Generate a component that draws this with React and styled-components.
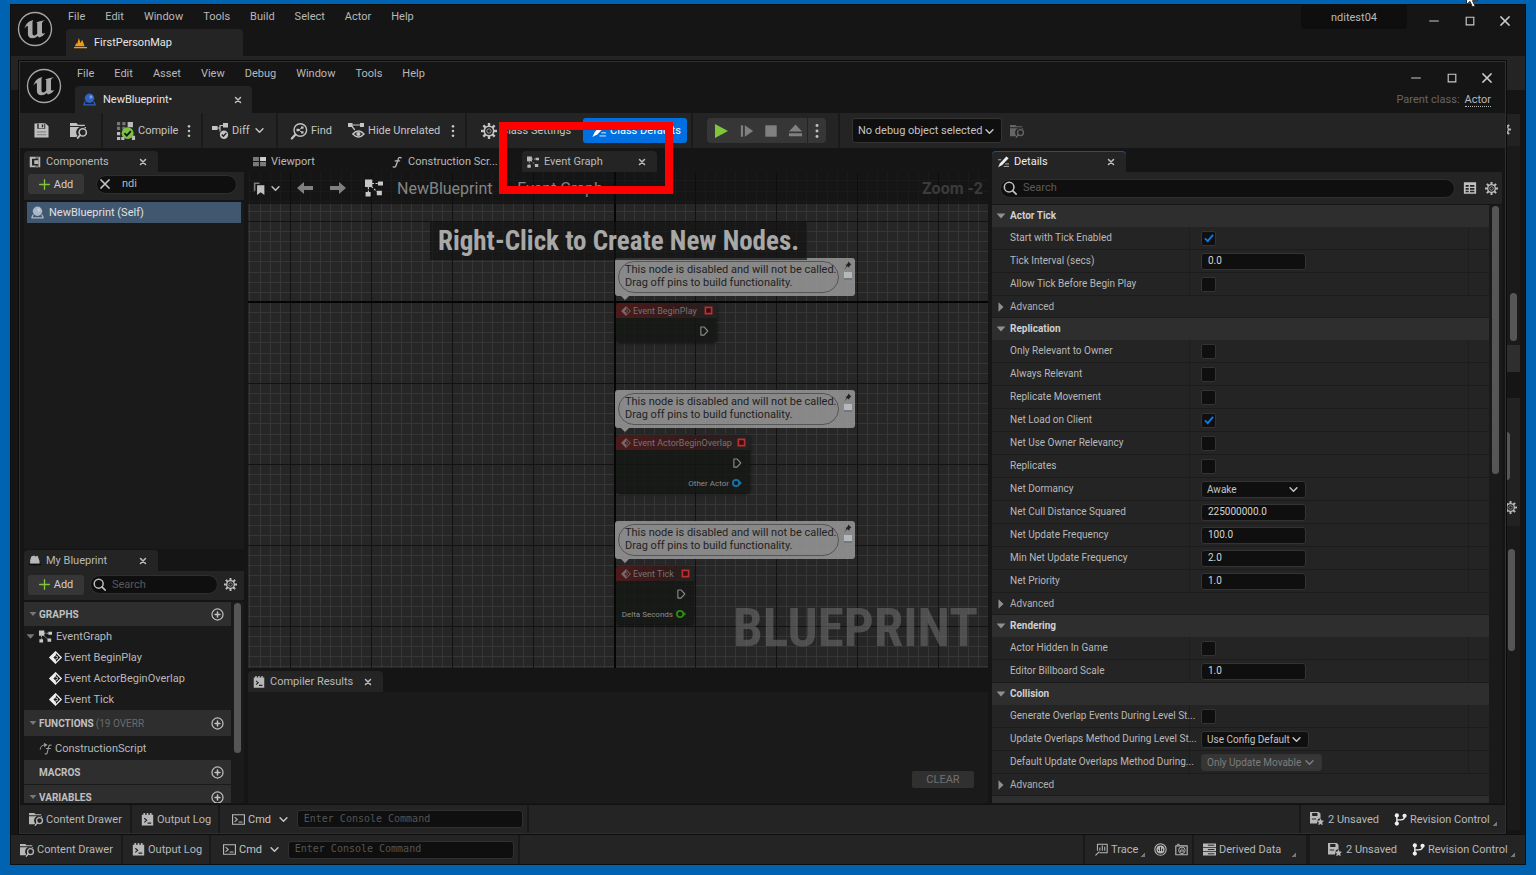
import React from "react";
import styled, { createGlobalStyle, css } from "styled-components";

const Global = createGlobalStyle`
  * { box-sizing: border-box; }
  body { margin: 0; background: #0063b1; }
  body, button, input, select {
    font-family: Roboto, "Liberation Sans", sans-serif;
    font-size: 11px;
    color: #b8b8b8;
  }
  button { border: 0; background: none; padding: 0; white-space: nowrap; }
  input, select { outline: 0; min-width: 0; }
`;

/* ---------- icons ---------- */

const Svg = styled.svg`
  display: block;
  flex: none;
  overflow: visible;
  color: ${(p) => p.$color || "inherit"};
`;

const Stroke = ({ d, w = 1.4 }) => (
  <path d={d} fill="none" stroke="currentColor" strokeWidth={w} strokeLinecap="round" strokeLinejoin="round" />
);
const Fill = ({ d, fill = "currentColor" }) => <path d={d} fill={fill} fillRule="evenodd" />;

const gearTeeth = Array.from({ length: 8 }, (_, i) => i * 45);

const glyphs = {
  close: <Stroke d="M4 4l8 8M12 4l-8 8" w={2.4} />,
  thinClose: <Stroke d="M2.500 2.500l11 11M13.500 2.500l-11 11" w={1.900} />,
  minimize: <Stroke d="M3 8h10" w={1.300} />,
  maximize: <Fill d="M3 3h10v10H3zM4.300 4.300v7.400h7.400V4.300z" />,
  chevron: <Stroke d="M3 5.500l5 5 5-5" w={2.200} />,
  dots: (
    <g fill="currentColor">
      <circle cx="8" cy="1.800" r="1.700" /><circle cx="8" cy="8" r="1.700" /><circle cx="8" cy="14.200" r="1.700" />
    </g>
  ),
  save: (
    <>
      <Fill d="M0.500 0.500h12L15.500 3.500v12h-15zM3.500 1v5h8.500V1z" />
      <Fill d="M5 0.500h6v5H5zM8.300 1.500v3h1.500v-3z" />
      <path d="M3 9.500h10M3 12.500h10" stroke="#777" strokeWidth="1" />
    </>
  ),
  folderFind: (
    <>
      <Fill d="M0 1h6l1.500 1.500H14v1.300H0z" />
      <Fill d="M0 4.800h15v1.500A5 5 0 0 0 7 13L6 14H0z" />
      <circle cx="12" cy="9.800" r="3.400" fill="none" stroke="currentColor" strokeWidth="1.500" />
      <Stroke d="M9.500 12.300L7.300 15" w={1.800} />
    </>
  ),
  compile: (
    <>
      <g fill="#777">
        <path d="M0 0h3v3H0zM5 0h3v3H5zM0 4.500h3v3H0zM5 4.500h3v3H5z" />
      </g>
      <g fill="#bdbdbd">
        <path d="M10 0h5v5h-5zM0 9.500h3v3H0zM0 14h3v3H0zM4 14h3v3H4zM14 13h3v4h-3z" />
      </g>
      <circle cx="10" cy="10.500" r="5.600" fill="#7cc142" />
      <path d="M7 10.500l2.200 2.300L13 8.500" fill="none" stroke="#151515" strokeWidth="1.700" />
    </>
  ),
  diff: (
    <>
      <Fill d="M0 3h5.500v4H0zM11 0h5v4.500h-5z" />
      <Stroke d="M5 5h3V2.500h3M8 5v3" w={1.200} />
      <circle cx="12" cy="11.700" r="4.200" fill="currentColor" />
      <path d="M9.800 11.500l1.600 1.700L14.300 10" fill="none" stroke="#242424" strokeWidth="1.400" />
    </>
  ),
  findNode: (
    <>
      <circle cx="9.300" cy="7" r="6.300" fill="none" stroke="currentColor" strokeWidth="1.400" />
      <Stroke d="M4.500 11.500L0.800 15.500" w={2.200} />
      <Fill d="M5.500 5.800H8v2.400H5.500zM10 3.500h2.500v2.200H10zM10 8.300h2.500v2.200H10z" />
      <Stroke d="M8 7l2.500-2M8 7l2.500 2.300" w={0.900} />
    </>
  ),
  hide: (
    <>
      <Fill d="M0 0h4.500v4H0zM12 0h4v4h-4z" />
      <Stroke d="M4 2h8M4 3.500l2.500 3" w={1.200} />
      <path d="M4.800 11Q10.500 5 16 11Q10.500 17 4.800 11z" fill="none" stroke="currentColor" strokeWidth="1.500" />
      <circle cx="10.400" cy="11" r="2.100" fill="currentColor" />
    </>
  ),
  gear: (
    <>
      <g fill="currentColor">
        {gearTeeth.map((a) => (
          <rect key={a} x="6.800" y="0" width="2.400" height="3.200" transform={`rotate(${a} 8 8)`} />
        ))}
      </g>
      <circle cx="8" cy="8" r="4.700" fill="none" stroke="currentColor" strokeWidth="1.600" />
      <circle cx="8" cy="8" r="2.200" fill="none" stroke="currentColor" strokeWidth="1" opacity="0.700" />
    </>
  ),
  pencil: (
    <>
      <Fill d="M12.500 0.500l3 2.500L7 12l-5.500 3L4 9.500z" />
      <Stroke d="M9.500 13.800h6M11.500 10.500h4M2 5h3" w={0.900} />
    </>
  ),
  play: <Fill d="M2 1l13 7-13 7z" fill="#7fc63b" />,
  step: <Fill d="M1 1.500h2.500v13H1zM5.500 1.500L15 8l-9.500 6.500z" />,
  stop: <Fill d="M1.500 1.500h13v13h-13z" />,
  eject: <Fill d="M8 1.500l7 7.500H1zM1 11h14v3H1z" />,
  components: (
    <>
      <Fill d="M1 1h8v2.500H4v9h5V15H1zM12.500 1H15v14h-2.500z" />
      <Fill d="M7 5.500h5.500v5H7zM10 0.500h1.500v3H10zM10 12.500h1.500v3H10z" />
    </>
  ),
  viewport: (
    <>
      <Fill d="M0 2.500h7.300v5H0zM0 8.700h7.300v5H0zM8.700 8.700H16v5H8.700z" fill="#7a7a7a" />
      <Fill d="M8.700 2.500H16v5H8.700z" fill="#d0d0d0" />
    </>
  ),
  func: (
    <>
      <Stroke d="M13.500 2.500Q10.500 0.500 9.500 4.500L7 12Q5.700 16 3 14.500" w={1.800} />
      <Stroke d="M5.500 6.500h6" w={1.500} />
    </>
  ),
  funcOverride: (
    <>
      <Stroke d="M15 4Q12.500 2.500 11.500 7L10.500 12Q9.500 16 7.500 14.500" w={1.300} />
      <Stroke d="M9 8h5M1.500 9Q1.500 4 7 3.500" w={1.200} />
      <Fill d="M6 1l4.500 2.500L6.500 6.500z" />
    </>
  ),
  graph: (
    <>
      <Fill d="M0 0.500h6.500V7H0zM11.500 2.200H16v3.600h-4.500zM0.500 11.500h4.500v4H0.500zM10.500 10.500H15v4h-4.500z" />
      <path d="M6 4h5.500M5.500 6.500l5.500 5M3 7v4.500" stroke="currentColor" strokeWidth="1" strokeDasharray="2 1.300" fill="none" />
    </>
  ),
  blueprint: (
    <>
      <Fill d="M3 2l4-1.500L8.500 2l3-1L14 8v3.500H1.500V7z" />
      <Fill d="M0 11.500h16v2H9l-1 1-1-1H0z" fill="#0c0c0c" />
    </>
  ),
  log: (
    <>
      <Fill d="M1 2h2V0h2v2h2V0h2v2h2V0h2v2h2v13.500H1z" />
      <path d="M4 6.500l3 2.500-3 2.500M8 12.500h4.500" fill="none" stroke="#202020" strokeWidth="1.400" />
    </>
  ),
  cmd: (
    <>
      <path d="M0.700 2.200h14.600v11.600H0.700z" fill="none" stroke="currentColor" strokeWidth="1.400" />
      <Stroke d="M3.500 5.500L6.500 8l-3 2.500M8.500 11h4" w={1.300} />
    </>
  ),
  search: (
    <>
      <circle cx="7" cy="7" r="5.500" fill="none" stroke="currentColor" strokeWidth="1.800" />
      <Stroke d="M11 11l4 4" w={2} />
    </>
  ),
  tableView: <Fill d="M1 1.500h14v13H1zM3 4.700v2h3.500v-2zM8 4.700v2h5v-2zM3 8v2h3.500V8zM8 8v2h5V8zM3 11.200v1.700h3.500v-1.700zM8 11.200v1.700h5v-1.700z" />,
  plus: <Stroke d="M8 1v14M1 8h14" w={2} />,
  circlePlus: (
    <>
      <circle cx="8" cy="8" r="6.800" fill="none" stroke="currentColor" strokeWidth="1.500" />
      <Stroke d="M8 5v6M5 8h6" w={1.900} />
    </>
  ),
  event: (
    <>
      <path d="M8 1l7 7-7 7-7-7z" fill="none" stroke="currentColor" strokeWidth="1.600" />
      <Fill d="M8.500 0.500v4.500L5.500 8l3 3v4.500L1 8z" />
      <Stroke d="M8.500 5.500v1.200h2v2.600h-2v1.200" w={0.800} />
    </>
  ),
  sphere: (
    <>
      <circle cx="8" cy="6.500" r="5.800" fill="currentColor" />
      <circle cx="9.800" cy="4.800" r="1.900" fill="#e4eaf2" opacity="0.450" />
      <Stroke d="M2.500 11L1 14.500h14L13.500 11" w={1.500} />
    </>
  ),
  level: <Fill d="M1 12.500l2-4 1 1 2-7 2 6 2-4 2 5 1 3zM0 13.500h16V15H0z" />,
  bookmark: (
    <>
      <Fill d="M1 0.500h7V2.500H3V10L1 12z" fill="#7a7a7a" />
      <Fill d="M5 4h9v12l-4.500-3.500L5 16z" />
    </>
  ),
  left: <Fill d="M0 8l7-6v4h9v4H7v4z" />,
  right: <Fill d="M16 8L9 2v4H0v4h9v4z" />,
  unsaved: (
    <>
      <Fill d="M0 0h10l2 2v5l-3 1-1 5H0zM2.500 1v3.500h6V1zM2 7.500v1h5v-1z" />
      <Fill d="M12 7l1.200 2.700 2.800.3-2 2 .5 3-2.500-1.400L9.500 15l.5-3-2-2 2.800-.3z" />
    </>
  ),
  branch: (
    <>
      <g fill="currentColor"><circle cx="3.500" cy="3" r="2.600" /><circle cx="13" cy="3.500" r="2.600" /><circle cx="3.500" cy="13" r="2.600" /></g>
      <Stroke d="M3.500 3v10M13 4q0 4.500-5 4.500H4" w={1.700} />
    </>
  ),
  trace: (
    <>
      <Stroke d="M3 9V1.500h12V12H6M5 11L1 15M6 9V6M9 9V3.500M12 9V5" w={1.300} />
    </>
  ),
  insights: (
    <>
      <circle cx="8" cy="8" r="7" fill="none" stroke="currentColor" strokeWidth="1.300" />
      <circle cx="8" cy="8" r="5" fill="currentColor" />
      <path d="M5.500 10V8M8 10V5M10.500 10V7" stroke="#242424" strokeWidth="1.200" />
    </>
  ),
  snapshot: (
    <>
      <Stroke d="M1 3.500h14v11H1zM3 1.500h2" w={1.400} />
      <circle cx="8.500" cy="9" r="4" fill="none" stroke="currentColor" strokeWidth="1.200" />
      <Stroke d="M6.800 10.500V9M8.500 10.500V7M10.200 10.500V8.500" w={1.100} />
    </>
  ),
  derived: (
    <>
      <Fill d="M0 0.500h16v4.300H0zM0 5.800h16v4.300H0zM0 11.100h16v4.300H0z" />
      <path d="M6 2.700h8M6 8h8M6 13.300h8" stroke="#242424" strokeWidth="1.200" />
    </>
  ),
  down: <Fill d="M1 4h14l-7 8z" />,
  closed: <Fill d="M4 0.500l8 7.500-8 7.500z" />,
  pin: <Fill d="M9 1l6 5-2 1-2 3 0 2-3-2.500L2 15l4.500-6L4 6.500h2.500L9 3z" />,
  check: <path d="M1.500 8.500l4.500 4.500 8.500-10" fill="none" stroke="#0f7cf0" strokeWidth="2.800" />,
  exec: <path d="M3 1.500h5l6 6.500-6 6.500H3z" fill="none" stroke="currentColor" strokeWidth="1.800" strokeLinejoin="round" />,
  dataPin: (
    <>
      <circle cx="6.500" cy="8" r="5" fill="none" stroke="currentColor" strokeWidth="3" />
      <Fill d="M12 4.500L16 8l-4 3.500z" />
    </>
  ),
  redPin: <path d="M2.500 2.500h11v11h-11z" fill="#3a0d0d" stroke="#b83030" strokeWidth="3" />,
};

const Icon = ({ name, size = 16, color }) => (
  <Svg width={size} height={size} viewBox="0 0 16 16" $color={color} aria-hidden="true">
    {glyphs[name]}
  </Svg>
);

const Logo = () => (
  <Svg width="36" height="36" viewBox="0 0 36 36" aria-label="Unreal Engine">
    <circle cx="18" cy="18" r="16.500" fill="#111" stroke="#a4a4a4" strokeWidth="1.400" />
    <path
      fill="#a8a8a8"
      d="M7.500 17.500C8.500 13 12 9.800 16.500 9C15.700 9.900 15.500 10.700 15.500 12V22.500C15.500 23.800 16.300 24.500 17.300 24.400C18.500 24.300 19.500 23.500 20.200 22.700V12.600C20.200 11.800 19.700 11.400 18.600 11.600C21 10.800 24 9.700 28.300 9.200C25.800 10.300 25 11.200 25 12.800V21C25 22.800 26 23.200 28.500 21.700C27.300 24 25 25.700 22 26.600L20.600 25C19 26.500 17.500 27.200 15.400 27.200C12.300 27.200 10.900 25.500 10.900 23V15.800C10.900 14.300 9.500 14.500 7.500 17.500Z"
    />
  </Svg>
);

/* ---------- windows ---------- */

const Desktop = styled.div`
  height: 100vh;
  padding: 4px 10px 10px;
  background: #0063b1;
  overflow: hidden;
`;

const OuterWindow = styled.section`
  position: relative;
  display: flex;
  flex-direction: column;
  height: 100%;
  border: 1px solid #0e0e0e;
  background: #151515;
`;

const InnerWindow = styled.section`
  position: absolute;
  inset: 56px 19px 30px 8px;
  display: flex;
  flex-direction: column;
  border: 1px solid #303030;
  outline: 1px solid #0b0b0b;
  background: #151515;
`;

const TitleBar = styled.header`
  display: flex;
  flex: none;
  height: 51px;
  padding-right: ${(p) => p.$end}px;
`;

const LogoCell = styled.div`
  display: flex;
  justify-content: center;
  align-items: center;
  width: 48px;
  margin-right: 7px;
  height: 48px;
`;

const TitleMain = styled.div`
  display: flex;
  flex-direction: column;
  justify-content: space-between;
  flex: 1;
`;

const Menu = styled.nav`
  display: flex;
  align-items: center;
  gap: 20px;
  height: 22px;
  padding-left: 2px;
`;

const WindowTab = styled.div`
  display: flex;
  align-items: center;
  gap: 7px;
  width: 177px;
  height: 27px;
  padding: 0 9px 0 8px;
  border-radius: 4px 4px 0 0;
  background: #242424;
  color: #e6e6e6;
`;

const Grow = styled.span`
  flex: 1;
  min-width: 0;
`;

const TitleSide = styled.div`
  display: flex;
  flex-direction: column;
  align-items: flex-end;
`;

const WindowControls = styled.div`
  display: flex;
  align-items: center;
  gap: 22px;
  height: 31px;
  color: #c9c9c9;
  button { color: inherit; }
`;

const ProjectName = styled.div`
  align-self: flex-start;
  width: 106px;
  margin-right: 20px;
  height: 24px;
  line-height: 25px;
  text-align: center;
  border-radius: 0 0 4px 4px;
  background: #0e0e0e;
`;

const ParentClass = styled.div`
  display: flex;
  gap: 5px;
  margin-right: 2px;
  color: #666;
  a {
    color: #b8b8b8;
    text-decoration: none;
    border-bottom: 1px dotted #b8b8b8;
  }
`;

const Cursor = styled.div`
  position: absolute;
  top: -11px;
  right: 58px;
`;

/* What the main editor shows along its right edge, beside the blueprint window */
const Backdrop = styled.div`
  display: flex;
  flex-direction: column;
  flex: 1;
  min-height: 0;
`;

const BackdropTop = styled.div`
  flex: none;
  height: 34px;
  background: #242424;
`;

const EdgeBlock = styled.div`
  display: flex;
  flex: none;
  align-self: flex-end;
  justify-content: flex-end;
  align-items: flex-start;
  width: 48px;
  height: ${(p) => p.$h}px;
  margin-right: 5px;
  padding: ${(p) => p.$top || 0}px ${(p) => p.$end || 3}px 0 0;
  background: ${(p) => p.$bg || "#1a1a1a"};
`;

const Thumb = styled.div`
  flex: none;
  width: 7px;
  height: ${(p) => p.$h}px;
  border-radius: 4px;
  background: #565656;
`;

/* ---------- toolbar ---------- */

const Toolbar = styled.div`
  display: flex;
  flex: none;
  height: 35px;
  background: #242424;
`;

const Group = styled.div`
  display: flex;
  align-items: center;
  gap: ${(p) => p.$gap || 12}px;
  width: ${(p) => (p.$w ? p.$w + "px" : "auto")};
  padding-left: ${(p) => p.$pad}px;
  border-right: ${(p) => (p.$w ? "2px solid #1a1a1a" : "0")};
`;

const ToolButton = styled.button`
  display: flex;
  align-items: center;
  gap: 4px;
  color: #c4c4c4;
`;

const PrimaryTool = styled(ToolButton)`
  width: 104px;
  height: 25px;
  padding-left: 8px;
  gap: 4px;
  border-radius: 3px;
  background: #0070e0;
  color: #fff;
`;

const PlayGroup = styled.div`
  display: flex;
  align-items: center;
  height: 25px;
  border-radius: 4px;
  background: #363636;
  color: #808080;
  button { display: flex; justify-content: center; width: 24px; color: inherit; }
  button:first-child { width: 28px; }
  button:last-child {
    align-items: center;
    width: 19px;
    height: 25px;
    border-left: 1px solid #242424;
    color: #c0c0c0;
  }
`;

const SelectBox = styled.span`
  position: relative;
  display: inline-flex;
  width: ${(p) => p.$w}px;
  height: ${(p) => p.$h || 17}px;
  select {
    width: 100%;
    appearance: none;
    padding: 0 15px 0 5px;
    border: 1px solid #333;
    border-radius: 3px;
    background: ${(p) => (p.$muted ? "#363636" : "#0f0f0f")};
    color: ${(p) => (p.$muted ? "#7d7d7d" : "#c4c4c4")};
    font-size: ${(p) => p.$font || 10}px;
    opacity: 1;
  }
  svg {
    position: absolute;
    right: 7px;
    top: calc(50% - 5px);
    pointer-events: none;
    color: ${(p) => (p.$muted ? "#7d7d7d" : "#c4c4c4")};
  }
`;

const Dropdown = ({ id, value, label, ...box }) => (
  <SelectBox {...box}>
    <select id={id} aria-label={label} defaultValue={value} disabled={box.$muted}>
      <option>{value}</option>
    </select>
    <Icon name="chevron" size={11} />
  </SelectBox>
);

/* ---------- docks ---------- */

const Docks = styled.main`
  display: flex;
  flex: 1;
  gap: 4px;
  min-height: 0;
  padding: 3px 3px 1px 4px;
`;

const Dock = styled.div`
  display: flex;
  flex-direction: column;
  min-width: 0;
  flex: ${(p) => (p.$w ? `0 0 ${p.$w}px` : "1 1 0")};
`;

const TabStrip = styled.div`
  display: flex;
  flex: none;
  height: 21px;
  margin-top: ${(p) => p.$top || 0}px;
`;

const Tab = styled.div`
  display: flex;
  align-items: center;
  gap: 5px;
  width: ${(p) => p.$w}px;
  padding: 0 10px 0 5px;
  border-radius: 4px 4px 0 0;
  background: ${(p) => (p.$on ? "#242424" : "transparent")};
  color: ${(p) => (p.$bright ? "#eee" : "#b8b8b8")};
  line-height: 20px;
  white-space: nowrap;
  ${(p) => p.$focus && css`box-shadow: inset 0 1px #12549a;`}
`;

const CloseButton = styled.button`
  color: #c0c0c0;
`;

const TabView = ({ icon, children, closable = true, iconSize = 12, ...rest }) => (
  <Tab {...rest}>
    <Icon name={icon} size={iconSize} />
    <Grow>{children}</Grow>
    {closable && (
      <CloseButton aria-label={`Close ${children}`}>
        <Icon name="close" size={10} />
      </CloseButton>
    )}
  </Tab>
);

const PanelBar = styled.div`
  display: flex;
  align-items: center;
  flex: none;
  gap: ${(p) => p.$gap || 6}px;
  height: ${(p) => p.$h || 28}px;
  padding: 0 ${(p) => p.$end || 7}px ${(p) => p.$bottom || 0}px ${(p) => p.$start || 4}px;
  margin-bottom: ${(p) => p.$below || 2}px;
  background: #242424;
`;

const AddButton = styled.button`
  display: flex;
  align-items: center;
  justify-content: center;
  gap: 4px;
  width: 56px;
  height: 20px;
  border-radius: 3px;
  background: #363636;
  color: #d0d0d0;
`;

const SearchBox = styled.label`
  display: flex;
  align-items: center;
  gap: ${(p) => p.$gap || 6}px;
  flex: 1;
  min-width: 0;
  height: 19px;
  padding: 0 6px 0 2px;
  border: 1px solid #2f2f2f;
  border-radius: 10px;
  background: #0f0f0f;
  color: #c0c0c0;
  input {
    flex: 1;
    width: 100%;
    padding: 0 0 1px;
    border: 0;
    background: none;
  }
  input::placeholder { color: #5a5a5a; opacity: 1; }
`;

const IconButton = styled.button`
  flex: none;
  color: #c0c0c0;
`;

const ListArea = styled.div`
  flex: 1;
  min-height: 0;
  padding: 0 3px;
  background: #1a1a1a;
`;

const SelectedRow = styled.div`
  display: flex;
  align-items: center;
  gap: 5px;
  height: 21px;
  padding-left: 4px;
  background: #40576f;
  color: #e0e0e0;
`;

const LowerDock = styled.div`
  display: flex;
  flex-direction: column;
  flex: 0 0 253px;
  min-height: 0;
  margin-top: 1px;
`;

const ScrollRow = styled.div`
  display: flex;
  flex: 1;
  min-height: 0;
  overflow: hidden;
  background: #1a1a1a;
`;

const ScrollBody = styled.div`
  flex: 1;
  min-width: 0;
`;

const ScrollTrack = styled.div`
  padding: ${(p) => p.$top || 0}px 3px 0;
  background: #1a1a1a;
`;

const TreeHeader = styled.div`
  display: flex;
  align-items: center;
  gap: 2px;
  height: ${(p) => p.$h || 24}px;
  margin-bottom: ${(p) => p.$gap || 0}px;
  padding: 0 7px 0 5px;
  background: #2e2e2e;
  color: #c0c0c0;
  font-size: 10px;
  white-space: nowrap;
  b { font-weight: 700; }
  i { font-style: normal; color: #6b6b6b; }
`;

const TreeItem = styled.div`
  display: flex;
  align-items: center;
  gap: ${(p) => p.$gap || 2}px;
  height: ${(p) => p.$h || 21}px;
  padding-left: ${(p) => p.$indent}px;
`;

/* ---------- graph ---------- */

const Canvas = styled.div`
  position: relative;
  flex: 1;
  min-height: 0;
  overflow: hidden;
  background: #262626;
`;

const GridArt = styled.svg`
  position: absolute;
  inset: 0;
  width: 100%;
  height: 100%;
`;

const GraphBar = styled.div`
  position: relative;
  display: flex;
  align-items: center;
  height: 32px;
  padding: 0 5px;
  background: rgba(12, 12, 12, 0.65);
  color: #858585;
  font-size: 16px;
  white-space: nowrap;
`;

const GraphTools = styled.div`
  display: flex;
  align-items: center;
  gap: ${(p) => p.$gap}px;
  width: ${(p) => p.$w}px;
`;

const Crumbs = styled.div`
  display: flex;
  flex: 1;
  gap: 10px;
`;

const Zoom = styled.b`
  color: #3b3b3b;
  font-size: 16px;
`;

const Hint = styled.div`
  position: absolute;
  left: 182px;
  top: 50px;
  height: 38px;
  padding: 0 8px;
  line-height: 38px;
  background: rgba(18, 18, 18, 0.7);
  color: #a8a8a8;
  font-family: "Roboto Condensed", Roboto, sans-serif;
  font-size: 27px;
  font-weight: 700;
  white-space: nowrap;
`;

const Watermark = styled.div`
  position: absolute;
  right: 10px;
  bottom: 9px;
  color: rgba(120, 120, 120, 0.5);
  font-family: "Roboto Condensed", Roboto, sans-serif;
  font-size: 53px;
  line-height: 62px;
  font-weight: 700;
`;

const NodeSpot = styled.article`
  position: absolute;
  left: 367px;
  top: ${(p) => p.$top}px;
`;

const Bubble = styled.div`
  position: relative;
  display: flex;
  gap: 4px;
  width: 240px;
  height: 38px;
  padding: 3px;
  border-radius: 3px;
  background: rgba(150, 150, 150, 0.88);
  color: #222;
  p {
    width: 223px;
    margin: 0;
    padding: 1px 0 0 6px;
    border: 1px solid #555;
    border-radius: 16px;
    line-height: 13px;
    white-space: nowrap;
  }
  &::after {
    content: "";
    position: absolute;
    left: 6px;
    top: 38px;
    border: 4px solid transparent;
    border-top-color: #8c8c8c;
    border-bottom: 0;
  }
`;

const BubbleMarks = styled.div`
  display: flex;
  flex-direction: column;
  align-items: center;
  gap: 2px;
  &::after {
    content: "";
    width: 8px;
    height: 6px;
    background: #b4b8bb;
    border-bottom: 2px solid #6f7a80;
  }
`;

const Node = styled.div`
  width: ${(p) => p.$w}px;
  height: ${(p) => p.$h}px;
  margin: 7px 0 0 1px;
  border-radius: 4px;
  background: rgba(20, 22, 20, 0.8);
  box-shadow: 0 1px 3px #0c0c0c;
  color: #8c8c8c;
  font-size: 8px;
`;

const NodeTitle = styled.div`
  display: flex;
  align-items: center;
  gap: 2px;
  height: 15px;
  padding: 0 4px 0 5px;
  border-radius: 4px 4px 0 0;
  background: linear-gradient(90deg, #4c1b1b, #331a1a 60%, #222);
  color: #747474;
  font-size: 9px;
  white-space: nowrap;
`;

const PinRow = styled.div`
  display: flex;
  align-items: center;
  justify-content: flex-end;
  gap: 3px;
  height: 20px;
  margin-top: ${(p) => (p.$first ? 3 : 0)}px;
  padding-right: 8px;
`;

const CompilerDock = styled.div`
  display: flex;
  flex-direction: column;
  flex: 0 0 135px;
`;

const CompilerBody = styled.div`
  display: flex;
  flex: 1;
  justify-content: flex-end;
  align-items: flex-end;
  padding: 0 14px 15px;
  background: #1a1a1a;
`;

const ClearButton = styled.button`
  width: 62px;
  height: 17px;
  border-radius: 2px;
  background: #303030;
  color: #707070;
`;

/* ---------- details ---------- */

const Section = styled.h3`
  display: flex;
  align-items: center;
  gap: 4px;
  height: 22px;
  margin: 0;
  padding-left: 4px;
  background: #2e2e2e;
  color: #d0d0d0;
  font-size: 10px;
  font-weight: 700;
  line-height: 20px;
  svg { color: #909090; }
`;

const Advanced = styled(Section)`
  background: #242424;
  border-bottom: 1px solid #1c1c1c;
  color: #b0b0b0;
  font-weight: 400;
`;

const Property = styled.div`
  display: grid;
  grid-template-columns: 198px 1fr 20px;
  height: 23px;
  border-bottom: 1px solid #1c1c1c;
  background: #242424;
  font-size: 10px;
  > * { border-right: 1px solid #1e1e1e; }
  > :last-child { border-right: 0; }
`;

const PropertyLabel = styled.label`
  padding-left: 18px;
  line-height: 22px;
  white-space: nowrap;
`;

const PropertyValue = styled.div`
  display: flex;
  align-items: center;
  padding-left: 11px;
`;

const NumberInput = styled.input`
  width: 105px;
  height: 17px;
  padding: 0 6px 1px;
  border: 1px solid #333;
  border-radius: 3px;
  background: #0f0f0f;
  color: #d4d4d4;
  font-size: 10px;
`;

const Tick = styled.span`
  position: relative;
  display: flex;
  width: 15px;
  height: 15px;
  input {
    appearance: none;
    width: 15px;
    height: 15px;
    margin: 0;
    border: 1px solid #333;
    border-radius: 2px;
    background: #0f0f0f;
  }
  svg { position: absolute; left: 3px; top: 2px; display: none; pointer-events: none; }
  input:checked + svg { display: block; }
`;

/* ---------- status bar ---------- */

const StatusBar = styled.footer`
  display: flex;
  flex: none;
  height: ${(p) => p.$h}px;
  background: #242424;
  border-top: 1px solid #111;
  white-space: nowrap;
`;

const StatusCell = styled.div`
  display: flex;
  flex: none;
  align-items: center;
  align-self: stretch;
  gap: ${(p) => p.$gap || 3}px;
  width: ${(p) => p.$w}px;
  padding-left: ${(p) => p.$pad || 9}px;
  border-right: 2px solid ${(p) => (p.$open ? "transparent" : "#191919")};
  ${(p) => p.$lead && css`border-left: 2px solid #191919;`}
`;

const ConsoleInput = styled.input`
  width: 226px;
  height: 18px;
  margin-left: 5px;
  padding: 0 6px 2px;
  border: 1px solid #303030;
  border-radius: 3px;
  background: #0f0f0f;
  font-family: "DejaVu Sans Mono", monospace;
  font-size: 10px;
  &::placeholder { color: #555; opacity: 1; }
`;

const Corner = styled.span`
  flex: none;
  align-self: flex-end;
  width: 4px;
  height: 4px;
  margin-bottom: 7px;
  margin-left: ${(p) => p.$gap || 0}px;
  background: linear-gradient(135deg, transparent 50%, #777 50%);
`;

const Highlight = styled.div`
  position: absolute;
  left: 479px;
  top: 60px;
  width: 174px;
  height: 72px;
  border: 8px solid #f00;
  pointer-events: none;
`;

/* ---------- composed parts ---------- */

const MenuBar = ({ items }) => (
  <Menu>
    {items.map((item) => (
      <button key={item}>{item}</button>
    ))}
  </Menu>
);

const Controls = () => (
  <WindowControls>
    <button aria-label="Minimize"><Icon name="minimize" size={14} /></button>
    <button aria-label="Maximize"><Icon name="maximize" size={14} /></button>
    <button aria-label="Close"><Icon name="thinClose" size={12} /></button>
  </WindowControls>
);

const StatusStart = () => (
  <>
    <StatusCell $w={112}>
      <Icon name="folderFind" size={14} />
      <button>Content Drawer</button>
    </StatusCell>
    <StatusCell $w={88}>
      <Icon name="log" size={13} />
      <button>Output Log</button>
    </StatusCell>
    <StatusCell $w={309} $pad={12}>
      <Icon name="cmd" size={13} />
      <ToolButton>Cmd&nbsp;<Icon name="chevron" size={11} /></ToolButton>
      <ConsoleInput aria-label="Console command" placeholder="Enter Console Command" />
    </StatusCell>
    <Grow />
  </>
);

const StatusEnd = ({ $w, $pad }) => (
  <StatusCell $w={$w} $pad={$pad} $open $lead $gap={4}>
    <Icon name="unsaved" size={14} />
    <button>2 Unsaved</button>
    <StatusCell $pad={11} $open $gap={3}>
      <Icon name="branch" size={13} color="#f0f0f0" />
      <button>Revision Control</button>
      <Corner />
    </StatusCell>
  </StatusCell>
);

const events = [
  { title: "Event BeginPlay", top: 86, w: 101, h: 39 },
  { title: "Event ActorBeginOverlap", top: 218, w: 134, h: 58, pin: "Other Actor", color: "#1374ac" },
  { title: "Event Tick", top: 349, w: 78, h: 58, pin: "Delta Seconds", color: "#2b8a12" },
];

const EventNode = ({ title, top, w, h, pin, color }) => (
  <NodeSpot $top={top}>
    <Bubble>
      <p>This node is disabled and will not be called.<br />Drag off pins to build functionality.</p>
      <BubbleMarks><Icon name="pin" size={9} /></BubbleMarks>
    </Bubble>
    <Node $w={w} $h={h}>
      <NodeTitle>
        <Icon name="event" size={10} color="#7c6c6c" />
        <Grow>{title}</Grow>
        <Icon name="redPin" size={9} />
      </NodeTitle>
      <PinRow $first><Icon name="exec" size={10} color="#8a8a8a" /></PinRow>
      {pin && <PinRow>{pin}<Icon name="dataPin" size={10} color={color} /></PinRow>}
    </Node>
  </NodeSpot>
);

const minor = [10, 20, 30, 40, 51, 61, 71];

const Grid = () => (
  <GridArt aria-hidden="true">
    <defs>
      <pattern id="grid" x="42" y="49" width="81" height="81" patternUnits="userSpaceOnUse">
        {minor.map((m) => (
          <path key={m} d={`M${m} 0h1v81h-1zM0 ${m}h81v1H0z`} fill="#363636" />
        ))}
        <path d="M0 0h81v1H0zM0 0h1v81H0z" fill="#121212" />
      </pattern>
    </defs>
    <rect width="100%" height="100%" fill="url(#grid)" />
    <rect x="0" y="129" width="100%" height="2" fill="#050505" />
    <rect x="366" y="0" width="2" height="100%" fill="#050505" />
  </GridArt>
);

const details = [
  {
    name: "Actor Tick",
    advanced: true,
    rows: [
      ["Start with Tick Enabled", "tick", true],
      ["Tick Interval (secs)", "number", "0.0"],
      ["Allow Tick Before Begin Play", "tick", false],
    ],
  },
  {
    name: "Replication",
    advanced: true,
    rows: [
      ["Only Relevant to Owner", "tick", false],
      ["Always Relevant", "tick", false],
      ["Replicate Movement", "tick", false],
      ["Net Load on Client", "tick", true],
      ["Net Use Owner Relevancy", "tick", false],
      ["Replicates", "tick", false],
      ["Net Dormancy", "select", "Awake", 105],
      ["Net Cull Distance Squared", "number", "225000000.0"],
      ["Net Update Frequency", "number", "100.0"],
      ["Min Net Update Frequency", "number", "2.0"],
      ["Net Priority", "number", "1.0"],
    ],
  },
  {
    name: "Rendering",
    rows: [
      ["Actor Hidden In Game", "tick", false],
      ["Editor Billboard Scale", "number", "1.0"],
    ],
  },
  {
    name: "Collision",
    advanced: true,
    rows: [
      ["Generate Overlap Events During Level St...", "tick", false],
      ["Update Overlaps Method During Level St...", "select", "Use Config Default", 108],
      ["Default Update Overlaps Method During...", "muted", "Only Update Movable", 121],
    ],
  },
];

const PropertyRow = ({ row: [label, kind, value, width] }) => {
  const id = label.replace(/\W+/g, "-").toLowerCase();
  return (
    <Property>
      <PropertyLabel htmlFor={id}>{label}</PropertyLabel>
      <PropertyValue>
        {kind === "tick" && (
          <Tick>
            <input id={id} type="checkbox" defaultChecked={value} />
            <Icon name="check" size={10} />
          </Tick>
        )}
        {kind === "number" && <NumberInput id={id} defaultValue={value} />}
        {(kind === "select" || kind === "muted") && (
          <Dropdown id={id} label={label} value={value} $w={width} $muted={kind === "muted"} />
        )}
      </PropertyValue>
      <span />
    </Property>
  );
};

const Details = () => (
  <Dock $w={510}>
    <TabStrip>
      <TabView icon="pencil" $w={134} $on $bright $focus>Details</TabView>
    </TabStrip>
    <PanelBar $h={32} $start={8} $end={4} $gap={8} $below={1}>
      <SearchBox>
        <Icon name="search" size={14} />
        <input aria-label="Search details" placeholder="Search" />
      </SearchBox>
      <IconButton aria-label="Property matrix"><Icon name="tableView" size={14} /></IconButton>
      <IconButton aria-label="Details settings"><Icon name="gear" size={13} /></IconButton>
    </PanelBar>
    <ScrollRow>
      <ScrollBody>
        {details.map((section) => (
          <React.Fragment key={section.name}>
            <Section><Icon name="down" size={10} />{section.name}</Section>
            {section.rows.map((row) => <PropertyRow key={row[0]} row={row} />)}
            {section.advanced && <Advanced as="div"><Icon name="closed" size={10} />Advanced</Advanced>}
          </React.Fragment>
        ))}
        <Section as="div" />
      </ScrollBody>
      <ScrollTrack $top={1}><Thumb $h={268} /></ScrollTrack>
    </ScrollRow>
  </Dock>
);

const TreeSection = ({ title, note, open = true, ...rest }) => (
  <TreeHeader {...rest}>
    <Icon name={open ? "down" : ""} size={8} color="#777" />
    <b>{title}</b>
    <i>{note}</i>
    <Grow />
    <IconButton aria-label={`Add to ${title}`}><Icon name="circlePlus" size={13} /></IconButton>
  </TreeHeader>
);

const LeftDock = () => (
  <Dock $w={220}>
    <TabStrip>
      <TabView icon="components" $w={134} $on>Components</TabView>
    </TabStrip>
    <PanelBar $gap={12} $bottom={4}>
      <AddButton><Icon name="plus" size={11} color="#7fc63b" />Add</AddButton>
      <SearchBox $gap={11}>
        <Icon name="thinClose" size={12} />
        <input aria-label="Search components" defaultValue="ndi" />
      </SearchBox>
    </PanelBar>
    <ListArea>
      <SelectedRow><Icon name="sphere" size={13} color="#a9b8c8" />NewBlueprint (Self)</SelectedRow>
    </ListArea>
    <LowerDock>
      <TabStrip>
        <TabView icon="blueprint" $w={134} $on>My Blueprint</TabView>
      </TabStrip>
      <PanelBar $h={29} $bottom={2}>
        <AddButton><Icon name="plus" size={11} color="#7fc63b" />Add</AddButton>
        <SearchBox>
          <Icon name="search" size={13} />
          <input aria-label="Search blueprint" placeholder="Search" />
        </SearchBox>
        <IconButton aria-label="Blueprint settings"><Icon name="gear" size={13} /></IconButton>
      </PanelBar>
      <ScrollRow>
        <ScrollBody>
          <TreeSection title="GRAPHS" />
          <TreeItem $indent={2} $gap={4}>
            <Icon name="down" size={9} color="#777" />
            <Icon name="graph" size={13} color="#c8c8c8" />
            EventGraph
          </TreeItem>
          {events.map((e) => (
            <TreeItem key={e.title} $indent={25}><Icon name="event" size={13} color="#eee" />{e.title}</TreeItem>
          ))}
          <TreeSection title="FUNCTIONS" note="(19 OVERR" $h={26} />
          <TreeItem $indent={15} $h={24} $gap={3}><Icon name="funcOverride" size={13} color="#999" />ConstructionScript</TreeItem>
          <TreeSection title="MACROS" open={false} $gap={1} />
          <TreeSection title="VARIABLES" />
        </ScrollBody>
        <ScrollTrack $top={1}><Thumb $h={150} /></ScrollTrack>
      </ScrollRow>
    </LowerDock>
  </Dock>
);

const CenterDock = () => (
  <Dock>
    <TabStrip>
      <TabView icon="viewport" iconSize={13} $w={138} closable={false}>Viewport</TabView>
      <TabView icon="func" $w={136} closable={false}>Construction Scr...</TabView>
      <TabView icon="graph" $w={135} $on>Event Graph</TabView>
    </TabStrip>
    <Canvas>
      <Grid />
      <GraphBar>
        <GraphTools $w={44} $gap={4}>
          <Icon name="bookmark" size={13} color="#c0c0c0" />
          <Icon name="chevron" size={11} color="#c0c0c0" />
        </GraphTools>
        <GraphTools $w={68} $gap={17}>
          <Icon name="left" color="#808080" />
          <Icon name="right" color="#808080" />
        </GraphTools>
        <GraphTools $w={32}><Icon name="graph" size={18} color="#c8c8c8" /></GraphTools>
        <Crumbs><span>NewBlueprint</span><span>›</span><span>Event Graph</span></Crumbs>
        <Zoom>Zoom -2</Zoom>
      </GraphBar>
      {events.map((e) => <EventNode key={e.title} {...e} />)}
      <Hint>Right-Click to Create New Nodes.</Hint>
      <Watermark>BLUEPRINT</Watermark>
    </Canvas>
    <CompilerDock>
      <TabStrip $top={3}>
        <TabView icon="log" $w={135} $on>Compiler Results</TabView>
      </TabStrip>
      <CompilerBody><ClearButton>CLEAR</ClearButton></CompilerBody>
    </CompilerDock>
  </Dock>
);

const MainToolbar = () => (
  <Toolbar>
    <Group $w={83} $pad={14} $gap={21}>
      <IconButton aria-label="Save"><Icon name="save" size={15} /></IconButton>
      <IconButton aria-label="Browse"><Icon name="folderFind" size={17} /></IconButton>
    </Group>
    <Group $w={100} $pad={14} $gap={5}>
      <ToolButton><Icon name="compile" size={17} />Compile</ToolButton>
      <IconButton aria-label="Compile options"><Icon name="dots" size={12} /></IconButton>
    </Group>
    <Group $w={75} $pad={9}>
      <ToolButton><Icon name="diff" />Diff<Icon name="chevron" size={11} /></ToolButton>
    </Group>
    <Group $w={189} $pad={13} $gap={16}>
      <ToolButton><Icon name="findNode" />Find</ToolButton>
      <ToolButton><Icon name="hide" />Hide Unrelated&nbsp;<Icon name="dots" size={12} /></ToolButton>
    </Group>
    <Group $w={226} $pad={14}>
      <ToolButton><Icon name="gear" />Class Settings</ToolButton>
      <PrimaryTool><Icon name="pencil" size={15} />Class Defaults</PrimaryTool>
    </Group>
    <Group $w={147} $pad={14}>
      <PlayGroup>
        <button aria-label="Play"><Icon name="play" /></button>
        <button aria-label="Step"><Icon name="step" size={14} /></button>
        <button aria-label="Stop"><Icon name="stop" size={14} /></button>
        <button aria-label="Eject"><Icon name="eject" size={15} /></button>
        <button aria-label="Play options"><Icon name="dots" size={14} /></button>
      </PlayGroup>
    </Group>
    <Group $pad={12} $gap={8}>
      <Dropdown label="Debug object" value="No debug object selected" $w={150} $h={25} $font={11} />
      <Icon name="folderFind" size={14} color="#666" />
    </Group>
  </Toolbar>
);

export default function App() {
  return (
    <Desktop>
      <Global />
      <OuterWindow>
        <TitleBar $end={14}>
          <LogoCell><Logo /></LogoCell>
          <TitleMain>
            <MenuBar items={["File", "Edit", "Window", "Tools", "Build", "Select", "Actor", "Help"]} />
            <WindowTab><Icon name="level" size={13} color="#f39a12" />FirstPersonMap</WindowTab>
          </TitleMain>
          <ProjectName>nditest04</ProjectName>
          <Controls />
        </TitleBar>
        <Backdrop>
          <BackdropTop />
          <EdgeBlock $h={24} $bg="#151515" />
          <EdgeBlock $h={32} $bg="#222" $top={9} $end={9}><Icon name="gear" size={13} /></EdgeBlock>
          <EdgeBlock $h={199} $top={147}><Thumb $h={48} /></EdgeBlock>
          <EdgeBlock $h={27} $bg="#2e2e2e" />
          <EdgeBlock $h={26} $bg="#151515" />
          <EdgeBlock $h={94} $bg="#222" $top={34} $end={10}><Thumb $h={48} /></EdgeBlock>
          <EdgeBlock $h={34} $bg="#222" $top={9} $end={3}><Icon name="gear" size={13} /></EdgeBlock>
          <EdgeBlock $h={304} $top={23} $end={5}><Thumb $h={102} /></EdgeBlock>
        </Backdrop>
        <StatusBar $h={30}>
          <StatusStart />
          <StatusCell $w={111} $pad={10} $lead>
            <Icon name="trace" size={13} />
            <button>Trace</button>
            <Corner />
            <StatusCell $pad={6} $gap={8} $open>
              <Icon name="insights" size={13} />
              <Icon name="snapshot" size={13} />
            </StatusCell>
          </StatusCell>
          <StatusCell $w={114} $pad={9}>
            <Icon name="derived" size={13} />
            <button>Derived Data</button>
            <Corner $gap={8} />
          </StatusCell>
          <StatusEnd $w={217} $pad={18} />
        </StatusBar>
        <InnerWindow>
          <TitleBar $end={12}>
            <LogoCell><Logo /></LogoCell>
            <TitleMain>
              <MenuBar items={["File", "Edit", "Asset", "View", "Debug", "Window", "Tools", "Help"]} />
              <WindowTab>
                <Icon name="sphere" size={13} color="#2f62c4" />
                <Grow>NewBlueprint•</Grow>
                <CloseButton aria-label="Close NewBlueprint"><Icon name="close" size={10} /></CloseButton>
              </WindowTab>
            </TitleMain>
            <TitleSide>
              <Controls />
              <ParentClass>Parent class: <a href="#actor">Actor</a></ParentClass>
            </TitleSide>
          </TitleBar>
          <MainToolbar />
          <Docks>
            <LeftDock />
            <CenterDock />
            <Details />
          </Docks>
          <StatusBar $h={29}>
            <StatusStart />
            <StatusEnd $w={206} $pad={9} />
          </StatusBar>
          <Highlight />
        </InnerWindow>
      </OuterWindow>
      <Cursor>
        <Svg width="12" height="19" viewBox="0 0 12 19" aria-hidden="true">
          <path d="M0.500 0.500v15l3.500-3 2.500 5.500 2.500-1-2.500-5.300h5z" fill="#fff" stroke="#222" />
        </Svg>
      </Cursor>
    </Desktop>
  );
}
